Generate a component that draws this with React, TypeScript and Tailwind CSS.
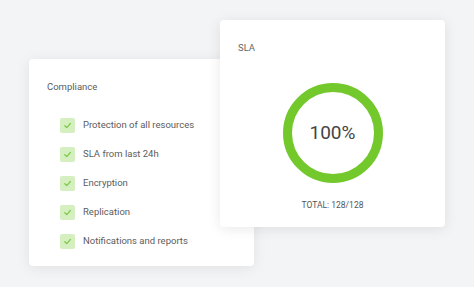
import React from "react";

const items = [
  "Protection of all resources",
  "SLA from last 24h",
  "Encryption",
  "Replication",
  "Notifications and reports",
];

const CheckBox = () => (
  <div className="w-[15px] h-[15px] rounded-[2px] bg-[#d5efc1] flex items-center justify-center">
    <svg width="9" height="9" viewBox="0 0 10 10" fill="none">
      <path d="M2 5.2 L4.2 7.3 L8.2 2.8" stroke="#7ccb4c" strokeWidth="1.4" strokeLinecap="round" strokeLinejoin="round" />
    </svg>
  </div>
);

const App = () => {
  return (
    <div
      className="w-[474px] h-[287px] bg-[#f3f4f6] overflow-hidden flex"
      style={{ fontFamily: "Roboto, 'Liberation Sans', sans-serif" }}
    >
      <div className="relative z-0 ml-[29px] mt-[59px] w-[225px] h-[207px] shrink-0 bg-white rounded-[4px] shadow-[0_2px_14px_rgba(0,0,0,0.08)] pt-[22px] pl-[18px]">
        <h2 className="text-[9.5px] leading-[12px] text-[#5c5c5c]">Compliance</h2>
        <ul className="mt-[25px] ml-[13px] flex flex-col gap-[14px]">
          {items.map((t) => (
            <li key={t} className="flex items-center h-[15px]">
              <CheckBox />
              <span className="ml-[8px] text-[9.5px] text-[#5c5c5c]">{t}</span>
            </li>
          ))}
        </ul>
      </div>
      <div className="relative z-10 -ml-[34px] mt-[20px] w-[225px] h-[207px] shrink-0 bg-white rounded-[4px] shadow-[0_2px_14px_rgba(0,0,0,0.09)] pt-[22px] pl-[18px] flex flex-col">
        <h2 className="text-[9.5px] leading-[12px] text-[#666]">SLA</h2>
        <div className="ml-[-18px] mt-[29px] flex justify-center">
          <div className="relative w-[100px] h-[100px]">
            <svg width="100" height="100" viewBox="0 0 100 100">
              <circle cx="50" cy="50" r="45.5" fill="none" stroke="#73c82c" strokeWidth="9" />
            </svg>
            <div className="absolute inset-0 flex items-center justify-center text-[19px] text-[#444]">100%</div>
          </div>
        </div>
        <div className="ml-[-18px] mt-[16px] text-center text-[8.5px] text-[#555]">TOTAL: 128/128</div>
      </div>
    </div>
  );
};

export default App;
